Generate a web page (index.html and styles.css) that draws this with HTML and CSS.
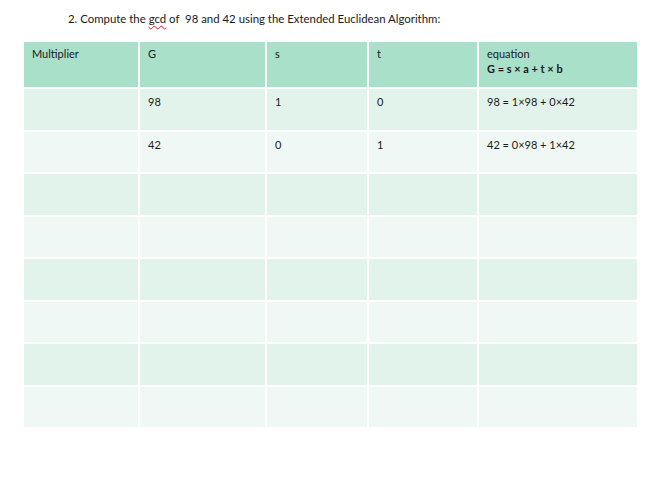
FILE: index.html
```html
<!DOCTYPE html>
<html>
<head>
<meta charset="utf-8">
<link rel="stylesheet" href="styles.css">
</head>
<body>
<p class="title">2. Compute the <span class="spell">gcd</span> of&nbsp; 98 and 42 using the Extended Euclidean Algorithm:</p>
<table class="grid">
  <colgroup>
    <col class="c1"><col class="c2"><col class="c3"><col class="c4"><col class="c5">
  </colgroup>
  <thead>
    <tr><th>Multiplier</th><th>G</th><th>s</th><th>t</th><th>equation<br><b>G = s × a + t × b</b></th></tr>
  </thead>
  <tbody>
    <tr><td></td><td>98</td><td>1</td><td>0</td><td>98 = 1×98 + 0×42</td></tr>
    <tr><td></td><td>42</td><td>0</td><td>1</td><td>42 = 0×98 + 1×42</td></tr>
    <tr><td></td><td></td><td></td><td></td><td></td></tr>
    <tr><td></td><td></td><td></td><td></td><td></td></tr>
    <tr><td></td><td></td><td></td><td></td><td></td></tr>
    <tr><td></td><td></td><td></td><td></td><td></td></tr>
    <tr><td></td><td></td><td></td><td></td><td></td></tr>
    <tr><td></td><td></td><td></td><td></td><td></td></tr>
  </tbody>
</table>
</body>
</html>
```
FILE: styles.css
```css
html, body { margin: 0; padding: 0; background: #fff; }
body {
  font-family: "Lato", "Open Sans", sans-serif;
  color: #1a1a1a;
  padding: 11px 0 0 24px;
}
.title {
  margin: 0 0 15px 44px;
  font-size: 11.4px;
  line-height: 16px;
}
.spell {
  text-decoration: underline wavy #d02020;
  text-decoration-thickness: 1px;
  text-underline-offset: 2px;
}
.grid {
  border-collapse: collapse;
  table-layout: fixed;
  width: 613px;
  font-size: 11px;
  line-height: 15px;
}
.c1 { width: 115px; }
.c2 { width: 127px; }
.c3 { width: 102px; }
.c4 { width: 110px; }
.c5 { width: 159px; }
.grid th, .grid td {
  border: 2px solid #fff;
  text-align: left;
  vertical-align: top;
  font-weight: normal;
  padding: 4px 8px 0 8px;
}
.grid th:first-child, .grid td:first-child { border-left: 0; }
.grid th:last-child, .grid td:last-child { border-right: 0; }
.grid thead th { background: #a9e0c9; height: 41px; border-top: 0; }
.grid thead th b { font-weight: bold; }
.grid tbody td { height: 35.5px; padding-top: 5px; }
.grid tbody tr:nth-child(odd) td { background: #e2f3ec; }
.grid tbody tr:nth-child(even) td { background: #f0f8f5; }
.grid tbody tr:last-child td { border-bottom: 0; }
```
